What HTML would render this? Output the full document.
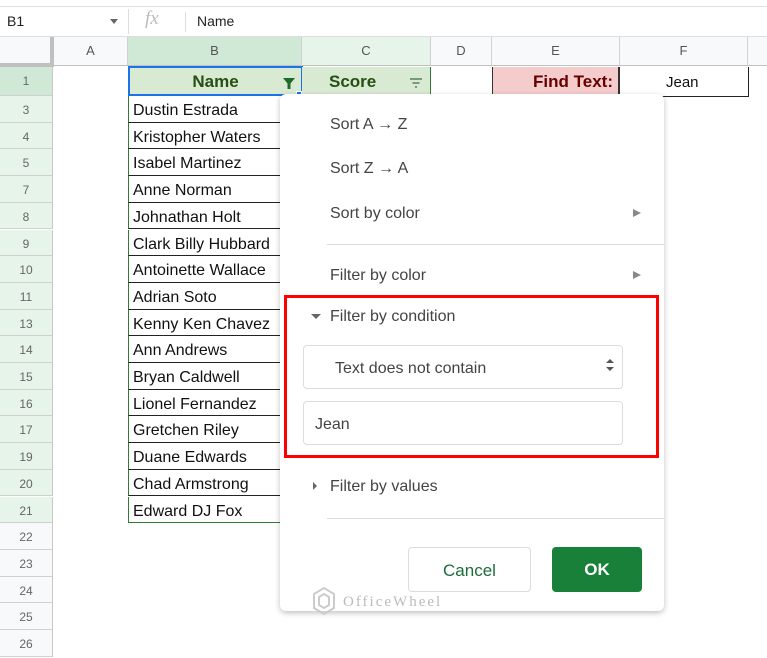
<!DOCTYPE html>
<html><head><meta charset="utf-8"><style>
*{box-sizing:border-box;margin:0;padding:0}
body{width:767px;height:641px;overflow:hidden;background:#fff;font-family:"Liberation Sans",Arial,sans-serif;position:relative}
.a{position:absolute}
.rn{position:absolute;left:0;width:53px;text-align:center;font-size:12px;color:#666;border-bottom:1px solid #d0d0d0;background:#f8f9fa;border-right:1px solid #c8c8c8}
.rn.g{background:#e6f4ea}
.ch{position:absolute;top:37px;height:29px;line-height:28px;text-align:center;font-size:13px;color:#555;border-right:1px solid #d0d0d0;border-bottom:1px solid #c0c0c0;background:#f8f9fa}
.nm{position:absolute;left:128px;width:160px;height:26.7px;border-bottom:1px solid #222;border-left:1px solid #2e7d32;font-size:16px;color:#111;line-height:29px;padding-left:4px;white-space:nowrap;overflow:hidden}
.mi{position:absolute;left:330px;font-size:16px;color:#444}
.arr{position:absolute;left:633px;width:0;height:0;border-top:4px solid transparent;border-bottom:4px solid transparent;border-left:8px solid #888}
</style></head><body>
<div class="a" style="left:0;top:0;width:767px;height:7px;background:#fff;border-bottom:1px solid #e0e0e0"></div>
<div class="a" style="left:0;top:8px;width:767px;height:29px;border-bottom:1px solid #ddd"></div>
<div class="a" style="left:7px;top:13px;font-size:14px;color:#222">B1</div>
<div class="a" style="left:110px;top:19px;border-left:4px solid transparent;border-right:4px solid transparent;border-top:5px solid #666"></div>
<div class="a" style="left:128px;top:9px;width:1px;height:25px;background:#ddd"></div>
<div class="a" style="left:145px;top:8px;font-size:19px;color:#bbb;font-style:italic;font-family:'Liberation Serif',serif">fx</div>
<div class="a" style="left:185px;top:12px;width:1px;height:20px;background:#ddd"></div>
<div class="a" style="left:197px;top:13px;font-size:14px;color:#222">Name</div>
<div class="a" style="left:0;top:37px;width:54px;height:30px;background:#f8f9fa;border-right:4px solid #c0c0c0;border-bottom:4px solid #c0c0c0"></div>
<div class="ch" style="left:54px;width:74px">A</div>
<div class="ch" style="left:128px;width:174px;background:#d0e9d6">B</div>
<div class="ch" style="left:302px;width:129px;background:#e6f4ea">C</div>
<div class="ch" style="left:431px;width:61px">D</div>
<div class="ch" style="left:492px;width:128px">E</div>
<div class="ch" style="left:620px;width:128px">F</div>
<div class="ch" style="left:748px;width:19px;border-right:0"></div>
<div class="rn g" style="top:67px;height:29px;line-height:29px;background:#d0e9d6">1</div>
<div class="rn g" style="top:96px;height:26.7px;line-height:28px">3</div>
<div class="rn g" style="top:122.7px;height:26.7px;line-height:28px">4</div>
<div class="rn g" style="top:149.4px;height:26.7px;line-height:28px">5</div>
<div class="rn g" style="top:176.1px;height:26.7px;line-height:28px">7</div>
<div class="rn g" style="top:202.8px;height:26.7px;line-height:28px">8</div>
<div class="rn g" style="top:229.5px;height:26.7px;line-height:28px">9</div>
<div class="rn g" style="top:256.2px;height:26.7px;line-height:28px">10</div>
<div class="rn g" style="top:282.9px;height:26.7px;line-height:28px">11</div>
<div class="rn g" style="top:309.6px;height:26.7px;line-height:28px">13</div>
<div class="rn g" style="top:336.3px;height:26.7px;line-height:28px">14</div>
<div class="rn g" style="top:363px;height:26.7px;line-height:28px">15</div>
<div class="rn g" style="top:389.7px;height:26.7px;line-height:28px">16</div>
<div class="rn g" style="top:416.4px;height:26.7px;line-height:28px">17</div>
<div class="rn g" style="top:443.1px;height:26.7px;line-height:28px">19</div>
<div class="rn g" style="top:469.8px;height:26.7px;line-height:28px">20</div>
<div class="rn g" style="top:496.5px;height:26.7px;line-height:28px">21</div>
<div class="rn" style="top:523.2px;height:26.7px;line-height:28px">22</div>
<div class="rn" style="top:549.9px;height:26.7px;line-height:28px">23</div>
<div class="rn" style="top:576.6px;height:26.7px;line-height:28px">24</div>
<div class="rn" style="top:603.3px;height:26.7px;line-height:28px">25</div>
<div class="rn" style="top:630px;height:26.7px;line-height:28px">26</div>
<div class="a" style="left:128px;top:66px;width:175px;height:30px;background:#d9ead3;border:2px solid #1a73e8;text-align:center;font-weight:bold;font-size:17px;color:#274e13;line-height:28px">Name</div>
<svg class="a" style="left:282px;top:77px" width="14" height="14" viewBox="0 0 14 14"><path d="M1 1H13L8.5 6.5V12H5.5V6.5Z" fill="#1e6b2c"/></svg>
<div class="a" style="left:296px;top:91px;width:6px;height:6px;background:#1a73e8;border:1px solid #fff"></div>
<div class="a" style="left:302px;top:67px;width:129px;height:29px;background:#d9ead3;border-right:1px solid #2e7d32;font-weight:bold;font-size:17px;color:#274e13;line-height:29px;padding-left:27px">Score</div>
<svg class="a" style="left:409px;top:77px" width="14" height="12"><path d="M1 2H13M3.5 6H10.5M6 10H8" stroke="#3c6e47" stroke-width="1.3"/></svg>
<div class="a" style="left:492px;top:67px;width:128px;height:29px;background:#f4cccc;border-left:1px solid #333;border-right:2px solid #333;font-weight:bold;font-size:17px;color:#660000;line-height:29px;text-align:right;padding-right:5px">Find Text:</div>
<div class="a" style="left:620px;top:67px;width:129px;height:30px;border-right:1px solid #222;border-bottom:1px solid #222;font-size:15px;color:#111;line-height:32px;padding-left:46px">Jean</div>
<div class="nm" style="top:96px">Dustin Estrada</div>
<div class="nm" style="top:122.7px">Kristopher Waters</div>
<div class="nm" style="top:149.4px">Isabel Martinez</div>
<div class="nm" style="top:176.1px">Anne Norman</div>
<div class="nm" style="top:202.8px">Johnathan Holt</div>
<div class="nm" style="top:229.5px">Clark Billy Hubbard</div>
<div class="nm" style="top:256.2px">Antoinette Wallace</div>
<div class="nm" style="top:282.9px">Adrian Soto</div>
<div class="nm" style="top:309.6px">Kenny Ken Chavez</div>
<div class="nm" style="top:336.3px">Ann Andrews</div>
<div class="nm" style="top:363px">Bryan Caldwell</div>
<div class="nm" style="top:389.7px">Lionel Fernandez</div>
<div class="nm" style="top:416.4px">Gretchen Riley</div>
<div class="nm" style="top:443.1px">Duane Edwards</div>
<div class="nm" style="top:469.8px">Chad Armstrong</div>
<div class="nm" style="top:496.5px;border-bottom:1px solid #2e7d32">Edward DJ Fox</div>
<div class="a" style="left:280px;top:94px;width:384px;height:517px;background:#fff;border-radius:6px;box-shadow:0 2px 6px rgba(0,0,0,.25)"></div>
<div class="mi" style="top:116px">Sort A → Z</div>
<div class="mi" style="top:160px">Sort Z → A</div>
<div class="mi" style="top:205px">Sort by color</div>
<div class="arr" style="top:209px"></div>
<div class="a" style="left:327px;top:244px;width:337px;height:1px;background:#dadce0"></div>
<div class="mi" style="top:267px">Filter by color</div>
<div class="arr" style="top:271px"></div>
<div class="a" style="left:311px;top:314px;border-left:5px solid transparent;border-right:5px solid transparent;border-top:5px solid #666"></div>
<div class="mi" style="top:308px">Filter by condition</div>
<div class="a" style="left:303px;top:345px;width:320px;height:44px;border:1px solid #dadce0;border-radius:4px;font-size:16px;color:#444;line-height:45px;padding-left:31px">Text does not contain</div>
<svg class="a" style="left:605px;top:358px" width="10" height="14"><path d="M1 5L5 1L9 5ZM1 9L5 13L9 9Z" fill="#555"/></svg>
<div class="a" style="left:303px;top:401px;width:320px;height:44px;border:1px solid #dadce0;border-radius:4px;font-size:16px;color:#444;line-height:45px;padding-left:11px">Jean</div>
<div class="a" style="left:284px;top:295px;width:375px;height:163px;border:3px solid #ff0000"></div>
<div class="a" style="left:313px;top:482px;border-top:4px solid transparent;border-bottom:4px solid transparent;border-left:4px solid #666"></div>
<div class="mi" style="top:478px">Filter by values</div>
<div class="a" style="left:327px;top:518px;width:337px;height:1px;background:#dadce0"></div>
<div class="a" style="left:408px;top:547px;width:123px;height:45px;border:1px solid #dadce0;border-radius:4px;text-align:center;line-height:45px;font-size:17px;color:#1e6b3c">Cancel</div>
<div class="a" style="left:552px;top:547px;width:90px;height:45px;background:#188038;border-radius:4px;text-align:center;line-height:46px;font-size:17px;color:#fff;font-weight:bold">OK</div>
<svg class="a" style="left:313px;top:587px" width="22" height="28"><path d="M11 1L21 7V21L11 27L1 21V7Z" fill="none" stroke="#ccc" stroke-width="2"/><path d="M11 7L16 10V18L11 21L6 18V10Z" fill="none" stroke="#ccc" stroke-width="2"/></svg>
<div class="a" style="left:343px;top:594px;font-size:15px;color:#bbb;letter-spacing:2px;font-family:'Liberation Serif',serif">OfficeWheel</div>
</body></html>
